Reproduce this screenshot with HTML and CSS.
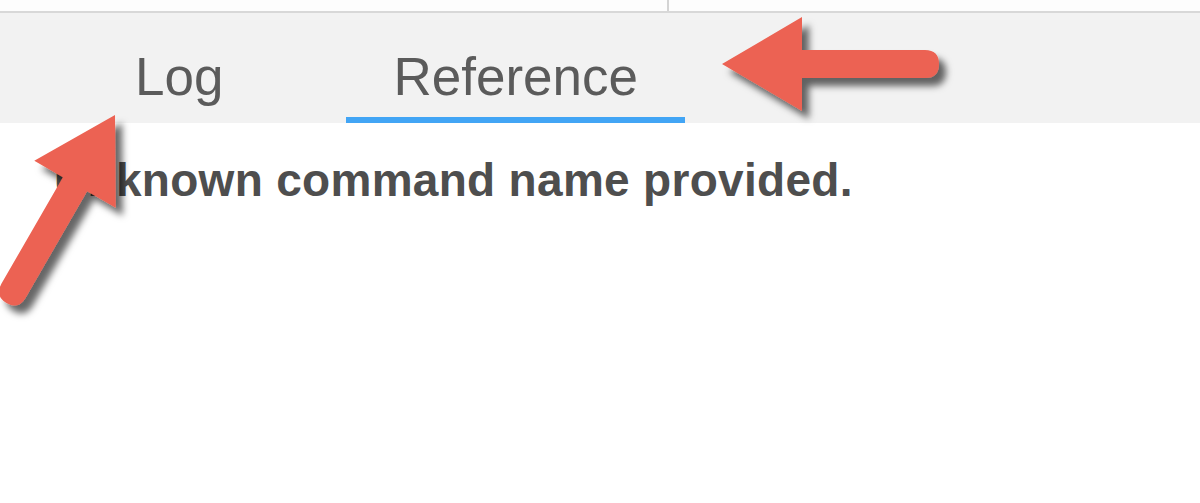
FILE: index.html
```html
<!DOCTYPE html>
<html lang="en">
<head>
<meta charset="utf-8">
<title>Reference</title>
<link rel="stylesheet" href="styles.css">
</head>
<body>
<div class="page">
  <div class="topstrip">
    <div class="pane pane-left"></div>
    <div class="pane pane-right"></div>
  </div>
  <nav class="tabbar">
    <div class="tab">Log</div>
    <div class="tab active">Reference</div>
  </nav>
  <main class="content">
    <p class="message">Unknown command name provided.</p>
  </main>
  <svg class="annotations" width="1200" height="503" viewBox="0 0 1200 503" aria-hidden="true">
    <defs>
      <filter id="shadow" x="-20%" y="-20%" width="150%" height="150%">
        <feDropShadow dx="7" dy="8" stdDeviation="3.5" flood-color="#000" flood-opacity="0.6"/>
      </filter>
      <path id="arrow" d="M0,0 L80,-47 L80,-14 L203,-14 Q217,-14 217,0 Q217,14 203,14 L80,14 L80,47 Z"/>
    </defs>
    <g filter="url(#shadow)">
      <use href="#arrow" class="arrow" transform="translate(722,64)"/>
    </g>
    <g filter="url(#shadow)">
      <use href="#arrow" class="arrow" transform="translate(115,115) rotate(120)"/>
    </g>
  </svg>
</div>
</body>
</html>
```
FILE: styles.css
```css
html, body {
  margin: 0;
  padding: 0;
  background: #ffffff;
}

.page {
  position: relative;
  width: 1200px;
  height: 503px;
  overflow: hidden;
  font-family: "Liberation Sans", Arial, sans-serif;
}

.topstrip {
  display: flex;
  height: 11px;
  border-bottom: 2px solid #d8d8d8;
  background: #fdfdfd;
}

.pane {
  height: 100%;
}

.pane-left {
  width: 667px;
  border-right: 2px solid #d4d4d4;
}

.pane-right {
  flex: 1;
}

.tabbar {
  display: flex;
  gap: 76px;
  padding-left: 88px;
  background: #f2f2f2;
  height: 110px;
  box-sizing: border-box;
}

.tab {
  padding: 37px 47px 14px;
  font-size: 53px;
  line-height: 53px;
  color: #5b5b5b;
  border-bottom: 6px solid transparent;
}

.tab.active {
  border-bottom-color: #42a5f5;
}

.content {
  padding: 34px 0 0 54px;
}

.message {
  margin: 0;
  font-size: 46px;
  line-height: 46px;
  font-weight: bold;
  letter-spacing: 0.3px;
  color: #4e4e4e;
}

.annotations {
  position: absolute;
  left: 0;
  top: 0;
  pointer-events: none;
}

.arrow {
  fill: #ec6252;
}
```
